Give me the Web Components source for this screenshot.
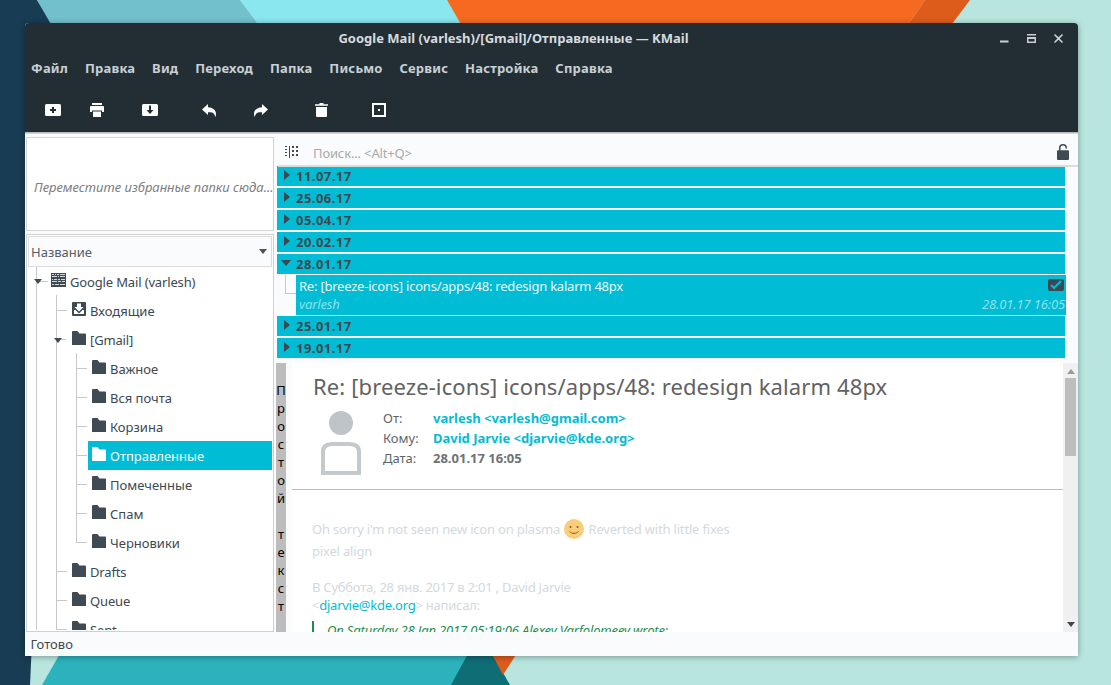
<!DOCTYPE html>
<html lang="ru"><head><meta charset="utf-8"><title>KMail</title>
<style>
html,body{margin:0;padding:0;width:1111px;height:685px;overflow:hidden;background:#183a50;font:13px "Noto Sans",sans-serif}
</style></head><body>
<kmail-desktop>
  <kmail-window>
    <title-bar slot="title">Google Mail (varlesh)/[Gmail]/Отправленные — KMail</title-bar>
    <menu-bar slot="menu"></menu-bar>
    <tool-bar slot="tools"></tool-bar>
    <folder-pane slot="left"></folder-pane>
    <search-bar slot="right"></search-bar>
    <message-list slot="right"></message-list>
    <message-viewer slot="right"></message-viewer>
    <status-bar slot="status">Готово</status-bar>
  </kmail-window>
</kmail-desktop>
<script>
const ICONS={
 add:['0 0 16 12','<path fill-rule="evenodd" d="M1.500 0h13A1.500 1.500 0 0 1 16 1.500v9a1.500 1.500 0 0 1-1.500 1.500h-13A1.500 1.500 0 0 1 0 10.500v-9A1.500 1.500 0 0 1 1.500 0zM7 3v2H5v2h2v2h2V7h2V5H9V3z"/>'],
 print:['0 0 14 14','<path d="M2 0h10v2H2zM1 3h12a1 1 0 0 1 1 1v5h-2V7.500H2V9H0V4a1 1 0 0 1 1-1zM3 8.500h8V14H3z"/>'],
 save:['0 0 16 12','<path fill-rule="evenodd" d="M1.500 0h13A1.500 1.500 0 0 1 16 1.500v9a1.500 1.500 0 0 1-1.500 1.500h-13A1.500 1.500 0 0 1 0 10.500v-9A1.500 1.500 0 0 1 1.500 0zM7 1.500V6H4.500L8 10l3.500-4H9V1.500z"/>'],
 reply:['0 0 14 13','<path d="M6 0v3.200c4.500.2 8 2.600 8 6.800 0 1.200-.3 2.200-.8 3-.2-2.800-2-4.500-4.200-4.800C8 8.100 7 8.100 6 8.200V11L0 5.500z"/>'],
 forward:['0 0 14 13','<path d="M8 0v3.200C3.500 3.400 0 5.800 0 10c0 1.200.3 2.200.8 3 .2-2.800 2-4.500 4.200-4.800 1-.1 2-.1 3 0V11l6-5.500z"/>'],
 trash:['0 0 13 14','<path d="M4.500 0h4v1.200H13v1.600H0V1.200h4.500zM1 4h11v9a1 1 0 0 1-1 1H2a1 1 0 0 1-1-1z"/>'],
 focus:['0 0 14 14','<path fill-rule="evenodd" d="M0 0h14v14H0zM2 2v10h10V2zM6 6h2v2H6z"/>'],
 folder:['0 0 14 14','<path d="M0 1a1 1 0 0 1 1-1h4.500l2 2.500H13a1 1 0 0 1 1 1V14H0z"/>'],
 inbox:['0 0 14 14','<path fill-rule="evenodd" d="M1 0h12a1 1 0 0 1 1 1v12a1 1 0 0 1-1 1H1a1 1 0 0 1-1-1V1a1 1 0 0 1 1-1zM5 1.500V5H2.500L7 9.500 11.500 5H9V1.500zM2 8v4h10V8l-1.500 0L7 11.500 3.500 8z"/>'],
 account:['0 0 15 14','<path d="M0 0h15v14H0z"/><path fill="#d6d9db" d="M1 1h2v1H1zM4 1h1v1H4zM6 1h2v1H6zM9 1h5v1H9zM1 3h5v1H1zM7 3h1v1H7zM9 3h5v1H9zM1 6h1v1H1zM3 6h3v1H3zM7 6h2v1H7zM10 6h4v1h-4zM1 8h5v1H1zM7 8h3v1H7zM11 8h3v1h-3zM1 11h2v1H1zM4 11h4v1H4zM9 11h5v1H9z"/>'],
 lock:['0 0 12 16','<path fill-rule="evenodd" d="M2 6.200V4a4 4 0 0 1 8 0v.5H8.500V4a2.500 2.500 0 0 0-5 0v2.200H11a1 1 0 0 1 1 1V15a1 1 0 0 1-1 1H1a1 1 0 0 1-1-1V7.200a1 1 0 0 1 1-1z"/>'],
 columns:['0 0 14 12','<path d="M0 0h2v1H0zM0 3h2v1H0zM0 6h2v1H0zM0 9h2v1H0zM4 0h1v12H4zM7 0h2v2H7zM11 0h2v2h-2zM7 4h2v2H7zM11 4h2v2h-2zM7 8h2v2H7zM11 8h2v2h-2z"/>'],
 right:['0 0 6 10','<path d="M0 0l6 5-6 5z"/>'],
 down:['0 0 10 6','<path d="M0 0h10L5 6z"/>']
};
function def(name,css,html,init){
  customElements.define(name,class extends HTMLElement{
    constructor(){super();const r=this.attachShadow({mode:'open'});r.innerHTML='<style>'+css+'</style>'+(typeof html==='function'?html(this):html)}
    connectedCallback(){if(init&&!this._i){this._i=1;init(this)}}
  });
}
def('x-icon',':host{display:inline-flex;flex:none;line-height:0;color:inherit}svg{display:block;fill:currentColor}','<span></span>',el=>{
  const [vb,p]=ICONS[el.getAttribute('name')];const [, ,w,h]=vb.split(' ');
  const s=el.getAttribute('size');const W=s?s.split('x')[0]:w,H=s?s.split('x')[1]:h;
  el.shadowRoot.querySelector('span').innerHTML=`<svg width="${W}" height="${H}" viewBox="${vb}" preserveAspectRatio="none">${p}</svg>`;
});

def('kmail-desktop',`:host{display:block;position:relative;width:1111px;height:685px;overflow:hidden}
 svg{position:absolute;inset:0}
 ::slotted(*){position:absolute;left:25px;top:23px}`,
`<svg width="1111" height="685" viewBox="0 0 1111 685">
 <rect width="1111" height="685" fill="#b8e6df"/>
 <path d="M0 0H37L60 35 30 685H0z" fill="#183c54"/>
 <path d="M37 0H240L270 40H60z" fill="#72c0cb"/>
 <path d="M240 0H447L470 40H270z" fill="#8ae6ef"/>
 <path d="M447 0H925L898 40H470z" fill="#f56a20"/>
 <path d="M925 0H970L940 40H898z" fill="#de5c1b"/>
 <path d="M62 650H470V685H42z" fill="#2cb2bc"/>
 <path d="M470 650H490L510 685H451z" fill="#0f6d75"/>
 <path d="M490 650H519L503 675z" fill="#de5c1b"/>
</svg><slot></slot>`);

def('kmail-window',`:host{display:grid;width:1053px;height:633px;grid-template-rows:109px 1fr 24px;background:#fafbfd;border-radius:4px 4px 0 0;box-shadow:0 1px 6px rgba(0,0,0,.35);overflow:hidden;color:#3d4850}
 .top{background:#232e34;display:flex;flex-direction:column;box-shadow:0 1px 0 #b5b8ba,0 2px 0 #d4d6d8;position:relative;z-index:1}
 .main{display:grid;grid-template-columns:251px 1fr;min-height:0}
 .right{display:flex;flex-direction:column;min-width:0;min-height:0}`,
`<div class="top"><slot name="title"></slot><slot name="menu"></slot><slot name="tools"></slot></div>
 <div class="main"><slot name="left"></slot><div class="right"><slot name="right"></slot></div></div>
 <slot name="status"></slot>`);

def('title-bar',`:host{display:flex;align-items:center;height:30px;position:relative;justify-content:center;color:#d5dbdf;font-weight:700;font-size:13px}
 .t{transform:translateX(-38px)}
 .b{position:absolute;right:15px;top:0;height:30px;display:flex;gap:18px;align-items:center;color:#c9ced2}
 svg{display:block;fill:currentColor}`,
`<span class="t"><slot></slot></span><div class="b">
 <svg width="9" height="9" viewBox="0 0 9 9"><path d="M0 6.500h8.500V8.500H0z"/></svg>
 <svg width="9" height="9" viewBox="0 0 9 9"><path fill-rule="evenodd" d="M0 0h9v1.500H0zM0 3h9v6H0zM1.500 5v2.500h6V5z"/></svg>
 <svg width="9" height="9" viewBox="0 0 9 9"><path d="M1 0l3.500 3.200L8 0l1 1-3.300 3.500L9 8l-1 1-3.500-3.300L1 9 0 8l3.300-3.500L0 1z"/></svg></div>`);

def('menu-bar',`:host{display:flex;height:30px;align-items:center;padding-left:6px;color:#c8d0d5;font-weight:700;font-size:13px;letter-spacing:.2px}
 span{margin-right:16.800px}`,
['Файл','Правка','Вид','Переход','Папка','Письмо','Сервис','Настройка','Справка'].map(t=>`<span>${t}</span>`).join(''));

def('tool-bar',`:host{display:flex;align-items:center;height:49px;padding:5px 0 0 20px;color:#fff;box-sizing:border-box}
 x-icon:nth-of-type(1){margin-right:29px}x-icon:nth-of-type(2){margin-right:38px}x-icon:nth-of-type(3){margin-right:44px}
 x-icon:nth-of-type(4){margin-right:38px}x-icon:nth-of-type(5){margin-right:47px}x-icon:nth-of-type(6){margin-right:44px}`,
['add','print','save','reply','forward','trash','focus'].map(n=>`<x-icon name="${n}"></x-icon>`).join(''));

def('tree-row',`:host{display:flex;align-items:center;height:29px;flex:none;position:relative;color:#3d4850}
 .tx{margin-left:4px;white-space:nowrap}
 .tx.lat{letter-spacing:-.15px}
 x-icon{color:#3f4a53;position:relative;top:-2px}
 .sel{position:absolute;left:var(--sel);right:0;top:0;bottom:0;background:#00bcd4}
 :host([selected]){color:#fff}
 :host([selected]) x-icon{color:#fff}
 .in{display:flex;align-items:center;position:relative}
 .tri{position:absolute;color:#3f4a53;left:var(--tri);top:var(--tt);line-height:0}
 .tri x-icon{top:0}
 .g{position:absolute;background:#c8c8c8}`,
el=>{
  const lvl=+el.getAttribute('level');const x=[23,44,64][lvl];
  const ic=el.getAttribute('icon')||'folder';
  const lab=el.getAttribute('label');
  const lat=/^[\x00-\x7f]+$/.test(lab)?' lat':'';
  const guides=(el.getAttribute('guides')||'').split(' ').filter(Boolean).map(s=>{const [l,t,w,h]=s.split(',');return `<i class="g" style="left:${l}px;top:${t}px;width:${w}px;height:${h}px"></i>`}).join('');
  const tri=el.hasAttribute('open')?`<span class="tri" style="--tri:${lvl===0?6:26}px;--tt:${lvl===0?12:13}px"><x-icon name="down" size="8x5"></x-icon></span>`:'';
  const sel=el.hasAttribute('selected')?`<div class="sel" style="--sel:${x-4}px"></div>`:'';
  return guides+sel+tri+`<div class="in" style="padding-left:${x}px"><x-icon name="${ic}"></x-icon><span class="tx${lat}">${lab}</span></div>`;
});

def('folder-pane',`:host{display:flex;flex-direction:column;gap:3px;padding:5px 0 0 1px;min-height:0;min-width:0}
 .fav{flex:none;background:#fff;border:1px solid #d3d3d3;display:flex;align-items:center;padding:6px 0 0 7px;box-sizing:border-box;height:94px;color:#7d7d7d;font-style:italic;white-space:nowrap;overflow:hidden;width:248px}
 .tree{flex:1;min-height:0;background:#fff;border:1px solid #d0d0d0;box-sizing:border-box;width:248px;padding:1px;overflow:hidden;display:flex;flex-direction:column}
 .hd{flex:none;height:31px;box-sizing:border-box;border:1px solid #dcdcdc;background:#fafbfd;display:flex;align-items:center;padding:0 3px 0 2px;color:#555f66;justify-content:space-between}
 .hd x-icon{color:#4a545b;margin-right:1px}
 .rows{flex:1;min-height:0;overflow:hidden;display:flex;flex-direction:column}`,
`<div class="fav">Переместите избранные папки сюда...</div>
 <div class="tree"><div class="hd"><span>Название</span><x-icon name="down" size="8x5"></x-icon></div>
 <div class="rows">
 <tree-row level="0" icon="account" open label="Google Mail (varlesh)" guides="8,0,1,29 8,14,12,1 28,28,1,1"></tree-row>
 <tree-row level="1" icon="inbox" label="Входящие" guides="8,0,1,29 28,0,1,29 28,14,11,1"></tree-row>
 <tree-row level="1" open label="[Gmail]" guides="8,0,1,29 28,0,1,29 28,14,10,1 48,28,1,1"></tree-row>
 <tree-row level="2" label="Важное" guides="8,0,1,29 28,0,1,29 48,0,1,29 48,14,11,1"></tree-row>
 <tree-row level="2" label="Вся почта" guides="8,0,1,29 28,0,1,29 48,0,1,29 48,14,11,1"></tree-row>
 <tree-row level="2" label="Корзина" guides="8,0,1,29 28,0,1,29 48,0,1,29 48,14,11,1"></tree-row>
 <tree-row level="2" selected label="Отправленные" guides="8,0,1,29 28,0,1,29 48,0,1,29 48,14,11,1"></tree-row>
 <tree-row level="2" label="Помеченные" guides="8,0,1,29 28,0,1,29 48,0,1,29 48,14,11,1"></tree-row>
 <tree-row level="2" label="Спам" guides="8,0,1,29 28,0,1,29 48,0,1,29 48,14,11,1"></tree-row>
 <tree-row level="2" label="Черновики" guides="8,0,1,29 28,0,1,29 48,0,1,15 48,14,11,1"></tree-row>
 <tree-row level="1" label="Drafts" guides="8,0,1,29 28,0,1,29 28,14,11,1"></tree-row>
 <tree-row level="1" label="Queue" guides="8,0,1,29 28,0,1,29 28,14,11,1"></tree-row>
 <tree-row level="1" label="Sent" guides="8,0,1,29 28,0,1,29 28,14,11,1"></tree-row>
 </div></div>`);

def('search-bar',`:host{display:flex;align-items:center;flex:none;margin:0 0 -1px 2px;box-sizing:border-box;padding:7px 9px 0 7px;border-bottom:2px solid #dcdcdc;color:#a8aaac;height:35px;position:relative;z-index:1}
 x-icon{color:#3f4a53}.c{margin-right:14px}.s{flex:1;letter-spacing:-.15px;position:relative;top:1px}`,
`<x-icon class="c" name="columns"></x-icon><span class="s">Поиск... &lt;Alt+Q&gt;</span><x-icon name="lock"></x-icon>`);

def('date-row',`:host{display:flex;align-items:center;height:20px;background:#00bcd4;color:#3d4850;font-weight:700;font-size:13px;letter-spacing:.45px;margin-bottom:2px;padding-left:7px}
 .a{width:12px;display:flex;color:#3d4850;position:relative;top:-1px}
 :host([open]){padding-left:4px;margin-bottom:1px}
 :host([open]) .a{width:15px}`,
el=>`<div class="a"><x-icon name="${el.hasAttribute('open')?'down':'right'}"></x-icon></div><span><slot></slot></span>`);

def('mail-row',`:host{display:flex;height:40px;margin-bottom:1px;width:789px}
 .tree{width:19px;position:relative;flex:none}
 .tree i{position:absolute;left:8px;top:0;width:11px;height:19px;border-left:1px solid #c8c8c8;border-bottom:1px solid #c8c8c8;box-sizing:border-box}
 .b{flex:1;background:#00bcd4;padding:1px 1px 0 3px;color:#eaf8fa;display:flex;flex-direction:column}
 .l{display:flex;justify-content:space-between;align-items:center;height:20px;white-space:nowrap}
 .l.i{height:16px}
 .sub{letter-spacing:-.22px}
 .i{font-style:italic;color:#8fe0ea;letter-spacing:-.15px}
 .chk{width:16px;height:12px;border-radius:2px;background:#3d4850;margin:-2px 1px 0 0;display:flex;align-items:center;justify-content:center}`,
`<div class="tree"><i></i></div><div class="b">
 <div class="l"><span class="sub">Re: [breeze-icons] icons/apps/48: redesign kalarm 48px</span>
 <span class="chk"><svg width="12" height="10" viewBox="0 0 12 10"><path d="M1 5l3 3 7-7" fill="none" stroke="#00bcd4" stroke-width="2"/></svg></span></div>
 <div class="l i"><span>varlesh</span><span>28.01.17 16:05</span></div></div>`);

def('message-list',`:host{display:block;flex:none;padding:0 0 0 1px;height:197px;box-sizing:border-box;width:789px}`,
`<date-row>11.07.17</date-row><date-row>25.06.17</date-row><date-row>05.04.17</date-row><date-row>20.02.17</date-row>
 <date-row open>28.01.17</date-row><mail-row></mail-row><date-row>25.01.17</date-row><date-row>19.01.17</date-row>`);

def('message-viewer',`:host{display:grid;flex:1;min-height:0;grid-template-columns:10px 6px 1fr 15px;overflow:hidden}
 .bar{background:#bdbdbd;color:#000;text-align:center;line-height:18px;font-size:13px;padding-top:18px;overflow:hidden;white-space:pre-line}
 .doc{background:#fff;overflow:hidden;min-width:0}
 .sb{background:#f0f0f0;display:flex;flex-direction:column;align-items:center;color:#9a9a9a;padding-top:6px}
 .thumb{width:11px;height:78px;background:#bdbdbd;margin-top:4px;flex:none}
 .dn{margin-top:auto;margin-bottom:5px;color:#3d4850}
 .up{color:#9a9a9a}
 h1{margin:0;font-weight:400;font-size:22px;letter-spacing:.11px;color:#626262;padding:8px 0 0 21px;line-height:30px;white-space:nowrap}
 .hdr{display:flex;padding:10px 0 0 29px;height:89px;box-sizing:border-box;border-bottom:1px solid #bcbcbc;margin-bottom:28px}
 .av{flex:none;margin-right:22px}
 .f{display:grid;grid-template-columns:50px auto;grid-auto-rows:20px;align-content:start;align-items:center;color:#5f6468;margin-top:-3px}
 .f b{color:#00bcd4;font-weight:700}.f b.d{color:#6e7275}
 .body{padding-left:20px;color:#d3d9de;line-height:18px;white-space:nowrap;letter-spacing:-.18px}
 .body p{margin:0}
 .em{display:inline-block;width:20px;height:20px;vertical-align:-5px;margin:0 1px}
 a{color:#00bcd4;text-decoration:none}
 .q{border-left:2px solid #1e8e50;margin-top:7px;padding-left:13px;color:#1e8e50;font-style:italic;letter-spacing:-.15px}`,
`<div class="bar">П
р
о
с
т
о
й

т
е
к
с
т</div><div></div>
<div class="doc"><h1>Re: [breeze-icons] icons/apps/48: redesign kalarm 48px</h1>
 <div class="hdr"><svg class="av" width="40" height="64" viewBox="0 0 40 64"><circle cx="20" cy="12" r="12" fill="#bfc4c8"/><path fill-rule="evenodd" d="M0 64V40c0-6 5-9 12-9h16c7 0 12 3 12 9v24zM4 60h32V41c0-4-3-6-8-6H12c-5 0-8 2-8 6z" fill="#c4c9cd"/></svg>
 <div class="f"><span>От:</span><b>varlesh &lt;varlesh@gmail.com&gt;</b><span>Кому:</span><b>David Jarvie &lt;djarvie@kde.org&gt;</b><span>Дата:</span><b class="d">28.01.17 16:05</b></div></div>
 <div class="body"><p style="line-height:22px">Oh sorry i'm not seen new icon on plasma <svg class="em" viewBox="0 0 20 20"><circle cx="10" cy="10" r="10" fill="#f9cd7a"/><circle cx="6.500" cy="8" r="1" fill="#8a5a20"/><circle cx="13.500" cy="8" r="1" fill="#8a5a20"/><path d="M5.500 12.500c2.500 2.500 6.500 2.500 9 0" fill="none" stroke="#8a5a20"/></svg> Reverted with little fixes<br>pixel align</p>
 <p style="margin-top:16px;letter-spacing:-.24px">В Суббота, 28 янв. 2017 в 2:01 , David Jarvie<br>&lt;<a>djarvie@kde.org</a>&gt; написал:</p>
 <div class="q">On Saturday 28 Jan 2017 05:19:06 Alexey Varfolomeev wrote:</div></div>
</div>
<div class="sb"><x-icon class="up" name="down" size="8x5" style="transform:scaleY(-1)"></x-icon><div class="thumb"></div><x-icon class="dn" name="down" size="8x5"></x-icon></div>`);

def('status-bar',`:host{display:flex;align-items:center;padding-left:5.500px;background:#fafbfd;color:#3d4850}`,'<slot></slot>');
</script>
</body></html>
